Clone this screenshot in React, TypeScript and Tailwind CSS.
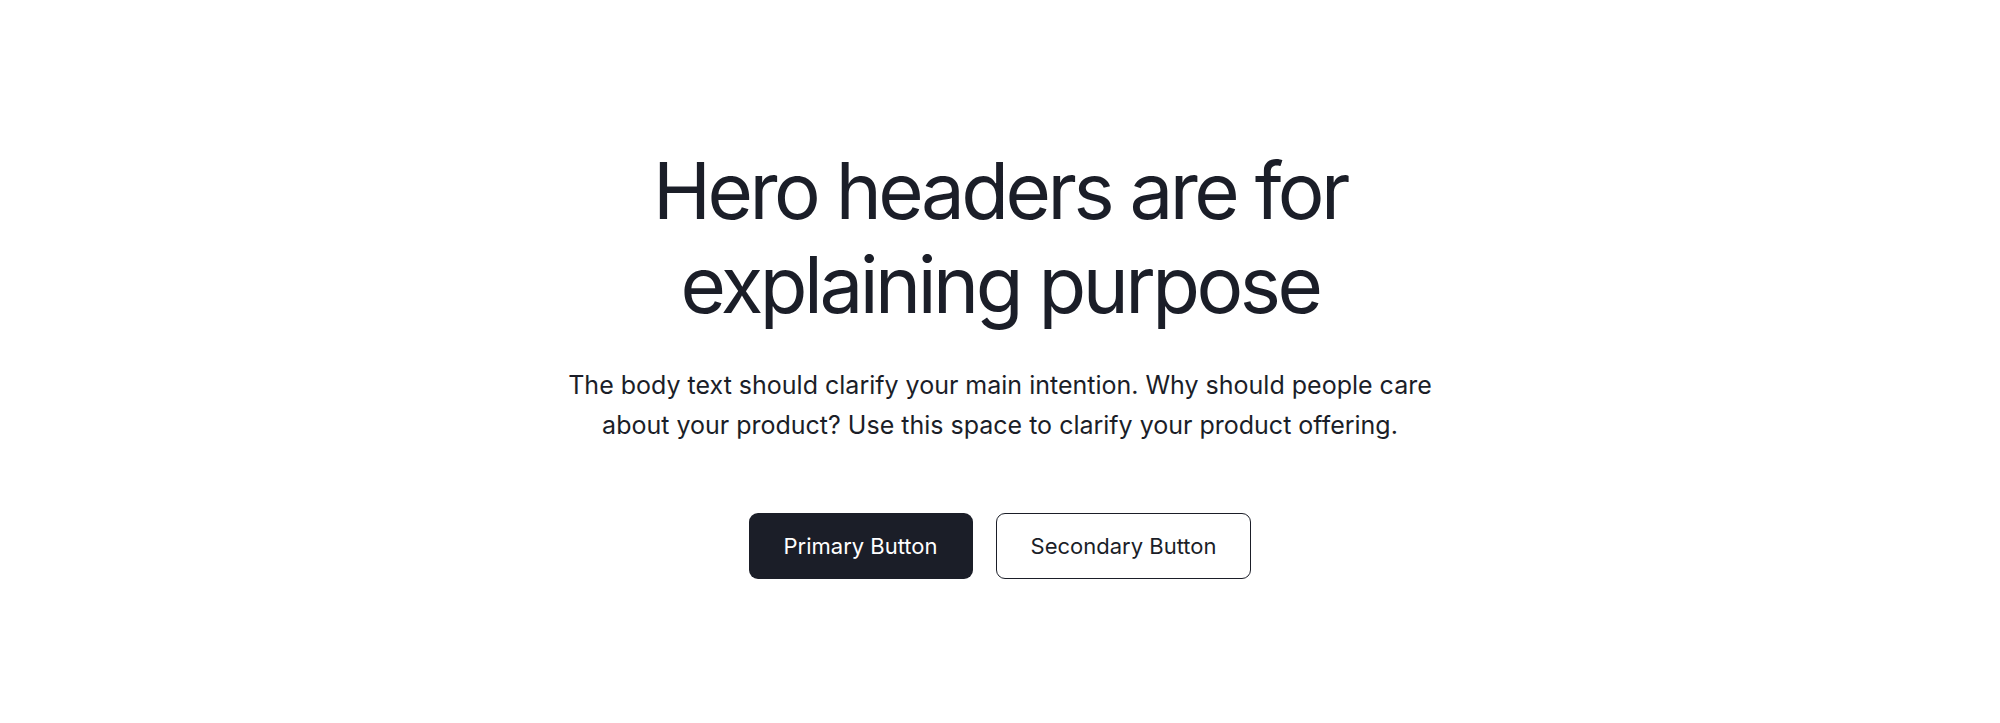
import React from 'react';

const Hero: React.FC = () => {
  return (
    <section className="min-h-screen flex items-center justify-center bg-white px-6">
      <div className="flex flex-col items-center text-center text-[#1b1e28]">
        <h1 className="text-[78px] leading-[93.6px] font-normal tracking-[-0.045em]">
          Hero headers are for
          <br />
          explaining purpose
        </h1>
        <p className="mt-[34px] max-w-[900px] text-[25px] leading-[40px]">
          The body text should clarify your main intention. Why should people care about your
          product? Use this space to clarify your product offering.
        </p>
        <div className="mt-[68px] flex items-center gap-[23px]">
          <button className="h-[66px] px-[35px] rounded-[9px] bg-[#1b1e28] text-white text-[22px]">
            Primary Button
          </button>
          <button className="h-[66px] px-[34px] rounded-[9px] border border-[#1b1e28] bg-white text-[#1b1e28] text-[22px]">
            Secondary Button
          </button>
        </div>
      </div>
    </section>
  );
};

export default function App() {
  return (
    <div style={{ fontFamily: 'Inter, "Noto Sans", sans-serif' }}>
      <Hero />
    </div>
  );
}
